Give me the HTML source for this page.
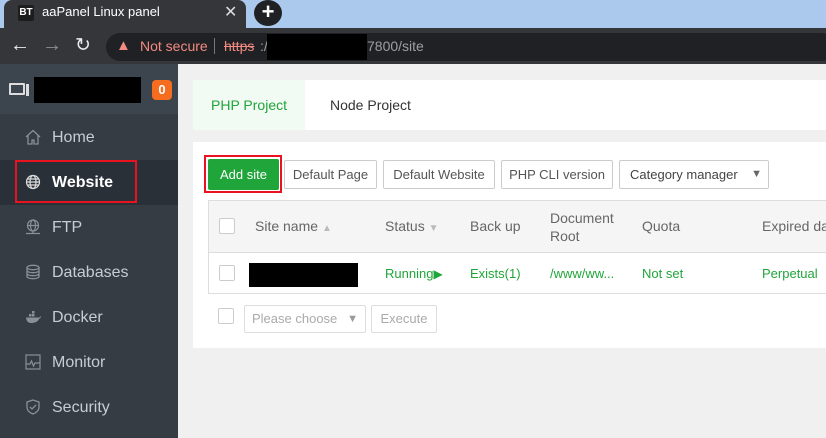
<!DOCTYPE html>
<html><head><style>
*{box-sizing:border-box;margin:0;padding:0}
body{width:826px;height:438px;overflow:hidden;font-family:"Liberation Sans",sans-serif;background:#f0f0f0;position:relative}
.abs{position:absolute}
.btn{position:absolute;top:160px;height:29px;border:1px solid #ccc;border-radius:2px;background:#fff;font-size:13px;color:#555;line-height:27px;text-align:center}
.nav{position:absolute;left:0;width:178px;height:45px;color:#c9cdd2;font-size:16px;line-height:45px;padding-left:52px}
.nav svg{position:absolute;left:25px;top:14px}
.cb{position:absolute;width:16px;height:16px;border:1px solid #ccc;border-radius:2px;background:#fff}
.th{position:absolute;font-size:14px;color:#666}
.td{position:absolute;font-size:13px;color:#20a53a;top:266px}
</style></head><body>
<div class="abs" style="left:0;top:0;width:826px;height:28px;background:#abc9ec"></div>
<div class="abs" style="left:4px;top:0;width:242px;height:28px;background:#35363a;border-radius:8px 8px 0 0"></div>
<div class="abs" style="left:18px;top:5px;width:16px;height:16px;background:#1d1d1d;color:#fff;font-size:10px;font-weight:bold;line-height:16px;text-align:center;border-radius:2px">BT</div>
<div class="abs" style="left:42px;top:4px;color:#fff;font-size:13px">aaPanel Linux panel</div>
<div class="abs" style="left:224px;top:2px;color:#ddd;font-size:16px">✕</div>
<div class="abs" style="left:254px;top:0;width:28px;height:26px;background:#202124;border-radius:50%;color:#fff;font-size:22px;line-height:24px;text-align:center;font-weight:bold">+</div>
<div class="abs" style="left:0;top:28px;width:826px;height:36px;background:#35363a"></div>
<div class="abs" style="left:10px;top:34px;color:#e8eaed;font-size:20px">←</div>
<div class="abs" style="left:42px;top:34px;color:#8c8e91;font-size:20px">→</div>
<div class="abs" style="left:75px;top:34px;color:#e8eaed;font-size:19px">↻</div>
<div class="abs" style="left:106px;top:33px;width:730px;height:28px;background:#202124;border-radius:14px"></div>
<div class="abs" style="left:116px;top:37px;color:#f28b82;font-size:15px">▲</div>
<div class="abs" style="left:140px;top:38px;color:#f28b82;font-size:14px">Not secure</div>
<div class="abs" style="left:214px;top:38px;width:1px;height:16px;background:#777"></div>
<div class="abs" style="left:224px;top:38px;color:#f28b82;font-size:14px;text-decoration:line-through">https</div>
<div class="abs" style="left:260px;top:38px;color:#9aa0a6;font-size:14px">://</div>
<div class="abs" style="left:267px;top:34px;width:100px;height:26px;background:#000"></div>
<div class="abs" style="left:367px;top:38px;color:#9aa0a6;font-size:14px">7800/site</div>
<div class="abs" style="left:0;top:64px;width:178px;height:374px;background:#353c44"></div>
<div class="abs" style="left:0;top:64px;width:178px;height:50px;background:#3c444d"></div>
<div class="abs" style="left:9px;top:83px;width:16px;height:12px;border:2px solid #ddd;border-radius:1px"></div>
<div class="abs" style="left:26px;top:84px;width:3px;height:12px;background:#ddd"></div>
<div class="abs" style="left:34px;top:77px;width:107px;height:26px;background:#000"></div>
<div class="abs" style="left:152px;top:80px;width:20px;height:20px;background:#f66d1f;border-radius:4px;color:#fff;font-weight:bold;font-size:13px;text-align:center;line-height:20px">0</div>
<div class="nav" style="top:115px"><svg width="16" height="16" viewBox="0 0 16 16" fill="none" stroke="#8a9097" stroke-width="1.3"><path d="M1 8L8 1.5 15 8M3 6.5V15h4v-4h2v4h4V6.5"/></svg>Home</div>
<div class="nav" style="top:160px;background:#2a3038;color:#fff;font-weight:bold"><svg width="16" height="16" viewBox="0 0 16 16" fill="none" stroke="#ddd" stroke-width="1.2"><circle cx="8" cy="8" r="6.5"/><ellipse cx="8" cy="8" rx="3" ry="6.5"/><path d="M1.5 8h13M2.5 5h11M2.5 11h11"/></svg>Website</div>
<div class="abs" style="left:15px;top:160px;width:122px;height:43px;border:2px solid #e8131e"></div>
<div class="nav" style="top:205px"><svg width="16" height="16" viewBox="0 0 16 16" fill="none" stroke="#8a9097" stroke-width="1.2"><circle cx="8" cy="6.5" r="5.5"/><ellipse cx="8" cy="6.5" rx="2.5" ry="5.5"/><path d="M2.5 6.5h11M8 12v2M1 14.5h14"/></svg>FTP</div>
<div class="nav" style="top:250px"><svg width="16" height="16" viewBox="0 0 16 16" fill="none" stroke="#8a9097" stroke-width="1.3"><ellipse cx="8" cy="3.5" rx="6" ry="2.2"/><path d="M2 3.5v9c0 1.2 2.7 2.2 6 2.2s6-1 6-2.2v-9M2 6.5c0 1.2 2.7 2.2 6 2.2s6-1 6-2.2M2 9.5c0 1.2 2.7 2.2 6 2.2s6-1 6-2.2"/></svg>Databases</div>
<div class="nav" style="top:295px"><svg width="16" height="16" viewBox="0 0 16 16" fill="#8a9097"><rect x="4" y="5" width="2.5" height="2.5"/><rect x="7" y="5" width="2.5" height="2.5"/><rect x="7" y="2" width="2.5" height="2.5"/><path d="M1 8.5h13.5c.5-1 1-1.2 1.5-1-.3 1.5-1 2-1.8 2.2C13 12.5 10 14 6 14 3 14 1.5 12 1 8.5z"/></svg>Docker</div>
<div class="nav" style="top:340px"><svg width="16" height="16" viewBox="0 0 16 16" fill="none" stroke="#8a9097" stroke-width="1.2"><rect x="1" y="1" width="14" height="14"/><path d="M1 10h4l1.5-3 2 5 1.5-3h5"/></svg>Monitor</div>
<div class="nav" style="top:385px"><svg width="16" height="16" viewBox="0 0 16 16" fill="none" stroke="#8a9097" stroke-width="1.3"><path d="M8 1L2 3v5c0 3.5 3 6 6 7 3-1 6-3.5 6-7V3z"/><path d="M5 8l2 2 4-4"/></svg>Security</div>
<div class="abs" style="left:193px;top:80px;width:633px;height:50px;background:#fff"></div>
<div class="abs" style="left:193px;top:80px;width:112px;height:50px;background:#f1faf3;color:#20a53a;font-size:14px;line-height:50px;text-align:center">PHP Project</div>
<div class="abs" style="left:330px;top:97px;color:#333;font-size:14px">Node Project</div>
<div class="abs" style="left:193px;top:142px;width:633px;height:206px;background:#fff"></div>
<div class="abs" style="left:204px;top:155px;width:78px;height:38px;border:2px solid #e8131e"></div>
<div class="btn" style="left:208px;top:159px;width:71px;height:31px;background:#20a53a;border-color:#20a53a;color:#fff;line-height:29px">Add site</div>
<div class="btn" style="left:284px;width:93px">Default Page</div>
<div class="btn" style="left:383px;width:112px">Default Website</div>
<div class="btn" style="left:501px;width:112px">PHP CLI version</div>
<div class="btn" style="left:619px;width:150px;text-align:left;padding-left:10px;color:#444">Category manager<span style="position:absolute;right:6px;top:0;color:#666;font-size:11px">▼</span></div>
<div class="abs" style="left:208px;top:200px;width:630px;height:94px;border:1px solid #ddd"></div>
<div class="abs" style="left:209px;top:201px;width:617px;height:52px;background:#f5f5f5;border-bottom:1px solid #ddd"></div>
<div class="cb" style="left:219px;top:218px"></div>
<div class="th" style="left:255px;top:218px">Site name <span style="color:#bbb;font-size:10px">▲</span></div>
<div class="th" style="left:385px;top:218px">Status <span style="color:#bbb;font-size:10px">▼</span></div>
<div class="th" style="left:470px;top:218px">Back up</div>
<div class="th" style="left:550px;top:209px;line-height:18px">Document<br>Root</div>
<div class="th" style="left:642px;top:218px">Quota</div>
<div class="th" style="left:762px;top:218px;white-space:nowrap">Expired date</div>
<div class="cb" style="left:219px;top:265px"></div>
<div class="abs" style="left:249px;top:263px;width:109px;height:24px;background:#000"></div>
<div class="td" style="left:385px">Running<span style="font-size:12px">▶</span></div>
<div class="td" style="left:470px">Exists(1)</div>
<div class="td" style="left:550px">/www/ww...</div>
<div class="td" style="left:642px">Not set</div>
<div class="td" style="left:762px">Perpetual</div>
<div class="cb" style="left:218px;top:308px"></div>
<div class="abs" style="left:244px;top:305px;width:122px;height:28px;border:1px solid #ddd;border-radius:2px;color:#aaa;font-size:13px;line-height:26px;padding-left:7px">Please choose<span style="position:absolute;right:7px;color:#999;font-size:11px">▼</span></div>
<div class="abs" style="left:371px;top:305px;width:66px;height:28px;border:1px solid #ddd;border-radius:2px;color:#aaa;font-size:13px;line-height:26px;text-align:center">Execute</div>
</body></html>
